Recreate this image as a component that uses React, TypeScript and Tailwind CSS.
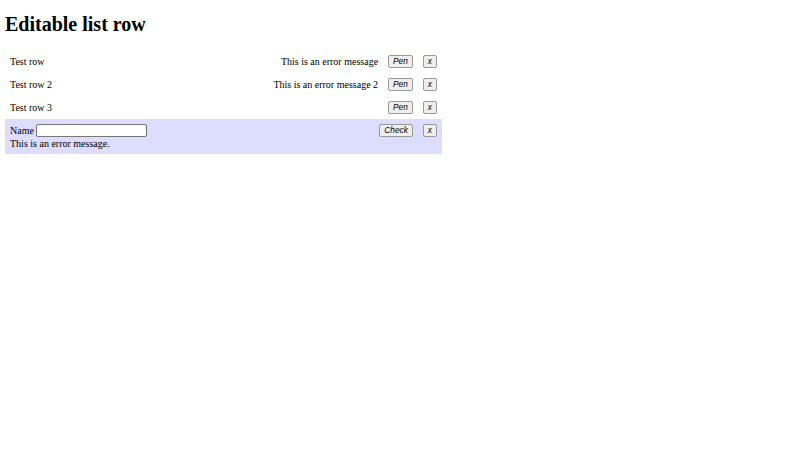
import React from "react";

const btn =
  "bg-[#efefef] border border-[#999999] rounded-[2px] px-[4px] h-[13px] leading-[11px] text-[8.3px] italic text-black";
const sans = { fontFamily: '"Liberation Sans", Arial, sans-serif' };

function Row({ label, error }: { label: string; error?: string }) {
  return (
    <div className="flex items-center justify-between px-[5px] py-[5px] h-[23px]">
      <span>{label}</span>
      <div className="flex items-center">
        {error && <span className="mr-[10px]">{error}</span>}
        <button className={btn} style={sans}>Pen</button>
        <button className={btn + " ml-[10px]"} style={sans}>x</button>
      </div>
    </div>
  );
}

export default function App() {
  return (
    <div
      className="mx-[5px] pt-[13.4px] text-[10px] leading-[11.5px] text-black"
      style={{ fontFamily: '"Liberation Serif", "Times New Roman", serif' }}
    >
      <h1 className="text-[20px] leading-[23px] font-bold mb-[13.4px]">Editable list row</h1>
      <div className="w-[437px]">
        <Row label="Test row" error="This is an error message" />
        <Row label="Test row 2" error="This is an error message 2" />
        <Row label="Test row 3" />
        <div className="flex justify-between px-[5px] py-[4.5px] bg-[#ddddff]">
          <div>
            <div className="flex items-center h-[14px]">
              <span>Name</span>
              <input
                type="text"
                className="ml-[2.5px] w-[111px] h-[13px] bg-white border border-[#767676] rounded-[2px]"
              />
            </div>
            <div className="mt-[1px]">This is an error message.</div>
          </div>
          <div className="flex items-start pt-[0.5px]">
            <button className={btn} style={sans}>Check</button>
            <button className={btn + " ml-[10px]"} style={sans}>x</button>
          </div>
        </div>
      </div>
    </div>
  );
}
